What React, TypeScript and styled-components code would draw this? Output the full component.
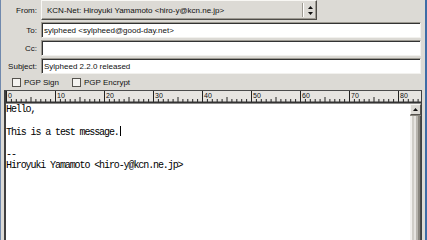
import React from "react";
import styled, { createGlobalStyle } from "styled-components";

const Global = createGlobalStyle`
  html, body { margin: 0; padding: 0; background: #dcdad5; overflow: hidden; }
  #root { width: 427px; height: 240px; }
`;

const Window = styled.div`
  box-sizing: border-box;
  width: 427px;
  height: 240px;
  background: #dcdad5;
  border-left: 1px solid #7089ad;
  border-right: 2px solid #3d6ca6;
  display: flex;
  flex-direction: column;
  font-family: "Liberation Sans", Arial, sans-serif;
  font-size: 8px;
  color: #111;
  overflow: hidden;
`;

const Header = styled.div`
  display: grid;
  grid-template-columns: 36px 1fr;
  grid-template-rows: 20px 16px 16px 16px;
  column-gap: 4px;
  row-gap: 2px;
  padding-right: 4px;
`;

const Label = styled.div`
  display: flex;
  align-items: center;
  justify-content: flex-end;
  white-space: nowrap;
`;

const Combo = styled.div`
  box-sizing: border-box;
  width: 276px;
  height: 20px;
  display: flex;
  align-items: center;
  padding-left: 5px;
  background: #dcdad5;
  border: 1px solid;
  border-color: #f8f7f4 #4e4c48 #4e4c48 #f8f7f4;
  box-shadow: inset -1px -1px 0 #9d9a92;
  white-space: nowrap;
`;

const ComboText = styled.span`
  flex: 1;
`;

const ComboSep = styled.span`
  width: 0;
  height: 14px;
  border-left: 1px solid #9d9a92;
  border-right: 1px solid #ffffff;
`;

const ComboArrows = styled.span`
  width: 12px;
  display: flex;
  justify-content: center;
  align-items: center;
`;

const Entry = styled.div`
  box-sizing: border-box;
  height: 16px;
  background: #fff;
  border: 1px solid;
  border-color: #9d9a92 #f2f1ee #f2f1ee #9d9a92;
  box-shadow: inset 1px 1px 0 #333;
  display: flex;
  align-items: center;
  padding-left: 2px;
  white-space: nowrap;
  color: #111;
`;

const CheckRow = styled.div`
  height: 16px;
  display: flex;
  align-items: center;
  padding-left: 11px;
  gap: 13px;
`;

const CheckItem = styled.label`
  display: flex;
  align-items: center;
  gap: 3px;
`;

const Box = styled.span`
  box-sizing: border-box;
  width: 9px;
  height: 9px;
  border: 1px solid #55534e;
  background: #f4f3f0;
`;

const Frame = styled.div`
  flex: 1;
  display: flex;
  flex-direction: column;
  margin: 0 3px 0 3px;
  border-top: 1px solid #4a4a4a;
  border-left: 2px solid #3f3f3f;
  border-right: 1px solid #3f3f3f;
  min-height: 0;
`;

const RulerBar = styled.div`
  height: 13px;
  background: #e6e4e0;
  flex: none;
`;

const Body = styled.div`
  flex: 1;
  display: flex;
  min-height: 0;
`;

const TextView = styled.div`
  flex: 1;
  background: #fff;
  font-family: "Liberation Mono", "Courier New", monospace;
  font-size: 10px;
  letter-spacing: -1.1px;
  line-height: 11px;
  white-space: pre;
  color: #000;
`;

const Caret = styled.span`
  display: inline-block;
  width: 1px;
  height: 10px;
  background: #000;
  margin-left: 1px;
  vertical-align: -1px;
`;

const Scrollbar = styled.div`
  width: 11px;
  display: flex;
  flex-direction: column;
  background: #c9c7c1;
`;

const ArrowButton = styled.div`
  box-sizing: border-box;
  height: 11px;
  display: flex;
  align-items: center;
  justify-content: center;
  background: #dcdad5;
  border: 1px solid;
  border-color: #f8f7f4 #55534e #55534e #f8f7f4;
`;

const Slider = styled.div`
  flex: 1;
  border-top: 1px solid #8a877f;
  background: linear-gradient(
    to right,
    #f2f1ee 0 2px,
    #d0cec8 2px 4px,
    #e6e4e0 4px 6px,
    #b8b5ae 6px 8px,
    #8a877f 8px 10px,
    #4a4a4a 10px 11px
  );
`;

const Ruler: React.FC = () => {
  const step = 4.9;
  const ticks: React.ReactNode[] = [];
  for (let i = 0; i <= 84; i++) {
    const x = 0.5 + i * step;
    const top = i % 10 === 0 ? 0 : i % 5 === 0 ? 6 : 8;
    ticks.push(<line key={"t" + i} x1={x} x2={x} y1={top} y2={11} stroke="#222" strokeWidth={1} />);
    if (i % 10 === 0) {
      ticks.push(
        <text key={"n" + i} x={x + 1.5} y={6.5} fontSize={7} fontFamily="Liberation Sans, Arial, sans-serif" fill="#111">
          {i}
        </text>
      );
    }
  }
  return (
    <svg width="415" height="13" viewBox="0 0 415 13" style={{ display: "block" }}>
      {ticks}
      <rect x={0} y={10.5} width={415} height={2} fill="#333" />
    </svg>
  );
};

const UpDown = () => (
  <svg width="5" height="9" viewBox="0 0 5 9">
    <path d="M2.5 0 L5 3 L0 3 Z" fill="#111" />
    <path d="M2.5 9 L5 6 L0 6 Z" fill="#111" />
  </svg>
);

const UpArrow = () => (
  <svg width="5" height="3" viewBox="0 0 5 3">
    <path d="M2.5 0 L5 3 L0 3 Z" fill="#111" />
  </svg>
);

export default function App() {
  return (
    <>
      <Global />
      <Window>
        <Header>
          <Label>From:</Label>
          <Combo>
            <ComboText>KCN-Net: Hiroyuki Yamamoto &lt;hiro-y@kcn.ne.jp&gt;</ComboText>
            <ComboSep />
            <ComboArrows>
              <UpDown />
            </ComboArrows>
          </Combo>
          <Label>To:</Label>
          <Entry>sylpheed &lt;sylpheed@good-day.net&gt;</Entry>
          <Label>Cc:</Label>
          <Entry />
          <Label>Subject:</Label>
          <Entry>Sylpheed 2.2.0 released</Entry>
        </Header>
        <CheckRow>
          <CheckItem>
            <Box />
            PGP Sign
          </CheckItem>
          <CheckItem>
            <Box />
            PGP Encrypt
          </CheckItem>
        </CheckRow>
        <Frame>
          <RulerBar>
            <Ruler />
          </RulerBar>
          <Body>
            <TextView>
              {"Hello,\n\nThis is a test message."}
              <Caret />
              {"\n\n--\nHiroyuki Yamamoto <hiro-y@kcn.ne.jp>"}
            </TextView>
            <Scrollbar>
              <ArrowButton>
                <UpArrow />
              </ArrowButton>
              <Slider />
            </Scrollbar>
          </Body>
        </Frame>
      </Window>
    </>
  );
}
